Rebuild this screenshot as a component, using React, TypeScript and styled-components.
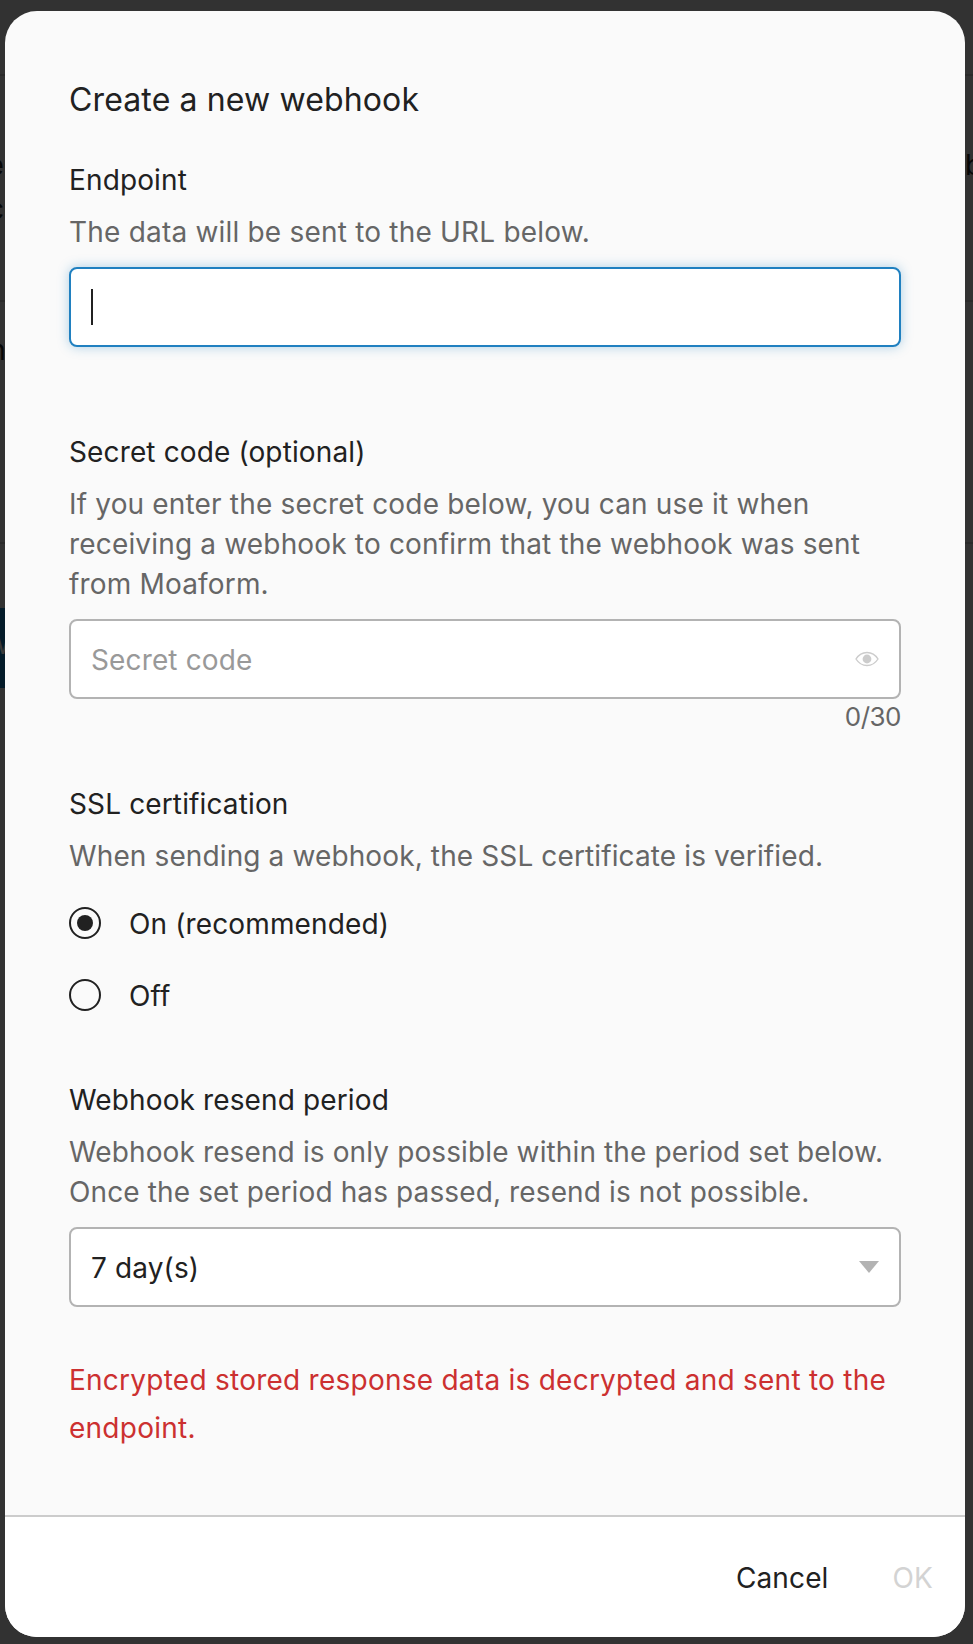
import React, { useState } from "react";
import styled, { createGlobalStyle, css } from "styled-components";

const GlobalStyle = createGlobalStyle`
  * { box-sizing: border-box; }
  body {
    margin: 0;
    background: #323232;
    color: #212121;
    font-family: Inter, "Liberation Sans", sans-serif;
    font-size: 28px;
    font-weight: 400;
    line-height: 40px;
    letter-spacing: 0.13px;
    font-optical-sizing: none;
  }
`;

const Screen = styled.div`
  display: grid;
  grid-template-columns: 5px 960px 8px;
  height: 1644px;
  overflow: hidden;
`;

const Edge = styled.div`
  display: flex;
  flex-direction: column;
  overflow: hidden;
  min-width: 0;
`;

const EdgeBlock = styled.div<{ $h: number; $line?: boolean; $blue?: boolean }>`
  flex: none;
  height: ${(p) => p.$h}px;
  border-bottom: ${(p) => (p.$line ? "2px solid #2a2a2a" : "0")};
  background: ${(p) => (p.$blue ? "#041b29" : "transparent")};
  color: ${(p) => (p.$blue ? "#3b3b3b" : "#070707")};
`;

const EdgeText = styled.div<{ $top: number; $end?: boolean; $shift?: number }>`
  display: flex;
  justify-content: ${(p) => (p.$end ? "flex-end" : "flex-start")};
  padding-top: ${(p) => p.$top}px;
  margin-right: ${(p) => p.$shift ?? 0}px;
`;

const Modal = styled.form`
  display: flex;
  flex-direction: column;
  margin: 11px 0 7px;
  border-radius: 32px;
  background: #fafafa;
  overflow: hidden;
`;

const Body = styled.div`
  flex: 1;
  padding: 65px 64px 0;
`;

const Title = styled.h1`
  margin: 0;
  font-size: 32px;
  font-weight: inherit;
  line-height: 48px;
`;

const Section = styled.section<{ $top: number }>`
  margin-top: ${(p) => p.$top}px;
`;

const Label = styled.h2`
  margin: 0 0 12px;
  font-size: 28px;
  font-weight: inherit;
  line-height: 40px;
`;

const Description = styled.p<{ $tracking?: number }>`
  margin: 0;
  color: #666;
  letter-spacing: ${(p) => p.$tracking ?? 0.12}px;
`;

const Field = styled.div<{ $focused?: boolean }>`
  display: flex;
  align-items: center;
  justify-content: space-between;
  height: 80px;
  margin-top: 15px;
  padding: 0 20px;
  border: 2px solid #b3b3b3;
  border-radius: 8px;
  background: #fff;
  line-height: 42px;
  ${(p) =>
    p.$focused &&
    css`
      border-color: #2080c0;
      box-shadow: 0 0 12px rgba(32, 128, 192, 0.35);
    `}
`;

const Caret = styled.span`
  width: 2px;
  height: 36px;
  background: #212121;
`;

const Value = styled.span<{ $empty?: boolean }>`
  padding-top: 2px;
  color: ${(p) => (p.$empty ? "#999" : "#212121")};
`;

const Counter = styled.div`
  color: #666;
  font-size: 26px;
  line-height: 36px;
  letter-spacing: -0.5px;
  text-align: right;
`;

const Option = styled.div`
  display: flex;
  align-items: center;
  gap: 28px;
  height: 32px;
  margin-top: 40px;
  cursor: pointer;
  &:first-child {
    margin-top: 31px;
  }
`;

const OptionText = styled.span`
  padding-top: 2px;
`;

const Radio = styled.span<{ $on: boolean }>`
  display: grid;
  place-items: center;
  width: 32px;
  height: 32px;
  border: 2px solid #212121;
  border-radius: 50%;
  &::after {
    content: "";
    width: 16px;
    height: 16px;
    border-radius: 50%;
    background: ${(p) => (p.$on ? "#212121" : "transparent")};
  }
`;

const Warning = styled.p`
  margin: 49px 0 0;
  color: #cc3030;
  line-height: 48px;
  letter-spacing: 0.25px;
`;

const Footer = styled.footer`
  display: flex;
  align-items: center;
  justify-content: flex-end;
  gap: 64px;
  height: 122px;
  padding: 2px 32px 0 0;
  border-top: 2px solid #ccc;
  background: #fff;
`;

const Action = styled.button`
  padding: 0;
  border: 0;
  background: none;
  color: #212121;
  font: inherit;
  letter-spacing: inherit;
  &:disabled {
    color: #d3d3d3;
  }
`;

const EyeIcon = () => (
  <svg width="24" height="16" viewBox="0 0 24 16" fill="none">
    <path d="M1 8C6.5-.7 17.5-.7 23 8C17.5 16.7 6.5 16.7 1 8Z" stroke="#ccc" strokeWidth="1.4" />
    <circle cx="12" cy="8" r="4.4" fill="#ccc" />
  </svg>
);

const ArrowIcon = () => (
  <svg width="20" height="12" viewBox="0 0 20 12">
    <path d="M0 0H20L10 12Z" fill="#b3b3b3" />
  </svg>
);

export default function App() {
  const [ssl, setSsl] = useState("on");
  return (
    <>
      <GlobalStyle />
      <Screen>
        <Edge>
          <EdgeBlock $h={76} $line />
          <EdgeBlock $h={113}>
            <EdgeText $top={69} $end $shift={1}>e</EdgeText>
          </EdgeBlock>
          <EdgeBlock $h={113} $line>
            <EdgeText $top={0} $end $shift={-16}>co</EdgeText>
          </EdgeBlock>
          <EdgeBlock $h={242} $line>
            <EdgeText $top={28} $end $shift={-1}>n</EdgeText>
          </EdgeBlock>
          <EdgeBlock $h={64} />
          <EdgeBlock $h={80} $blue>
            <EdgeText $top={16} $end $shift={-14}>w</EdgeText>
          </EdgeBlock>
        </Edge>
        <Modal>
          <Body>
            <Title>Create a new webhook</Title>
            <Section $top={36}>
              <Label>Endpoint</Label>
              <Description $tracking={0.2}>The data will be sent to the URL below.</Description>
              <Field $focused>
                <Caret />
              </Field>
            </Section>
            <Section $top={85}>
              <Label>Secret code (optional)</Label>
              <Description $tracking={0.17}>
                If you enter the secret code below, you can use it when receiving a webhook to confirm that the webhook
                was sent from Moaform.
              </Description>
              <Field>
                <Value $empty>Secret code</Value>
                <EyeIcon />
              </Field>
              <Counter>0/30</Counter>
            </Section>
            <Section $top={49}>
              <Label>SSL certification</Label>
              <Description>When sending a webhook, the SSL certificate is verified.</Description>
              <div>
                <Option onClick={() => setSsl("on")}>
                  <Radio $on={ssl === "on"} />
                  <OptionText>On (recommended)</OptionText>
                </Option>
                <Option onClick={() => setSsl("off")}>
                  <Radio $on={ssl === "off"} />
                  <OptionText>Off</OptionText>
                </Option>
              </div>
            </Section>
            <Section $top={69}>
              <Label>Webhook resend period</Label>
              <Description>
                Webhook resend is only possible within the period set below. Once the set period has passed, resend is
                not possible.
              </Description>
              <Field>
                <Value>7 day(s)</Value>
                <ArrowIcon />
              </Field>
            </Section>
            <Warning>Encrypted stored response data is decrypted and sent to the endpoint.</Warning>
          </Body>
          <Footer>
            <Action type="button">Cancel</Action>
            <Action type="button" disabled>
              OK
            </Action>
          </Footer>
        </Modal>
        <Edge>
          <EdgeBlock $h={76} $line />
          <EdgeBlock $h={226} $line>
            <EdgeText $top={69}>b</EdgeText>
          </EdgeBlock>
          <EdgeBlock $h={242} $line />
        </Edge>
      </Screen>
    </>
  );
}
